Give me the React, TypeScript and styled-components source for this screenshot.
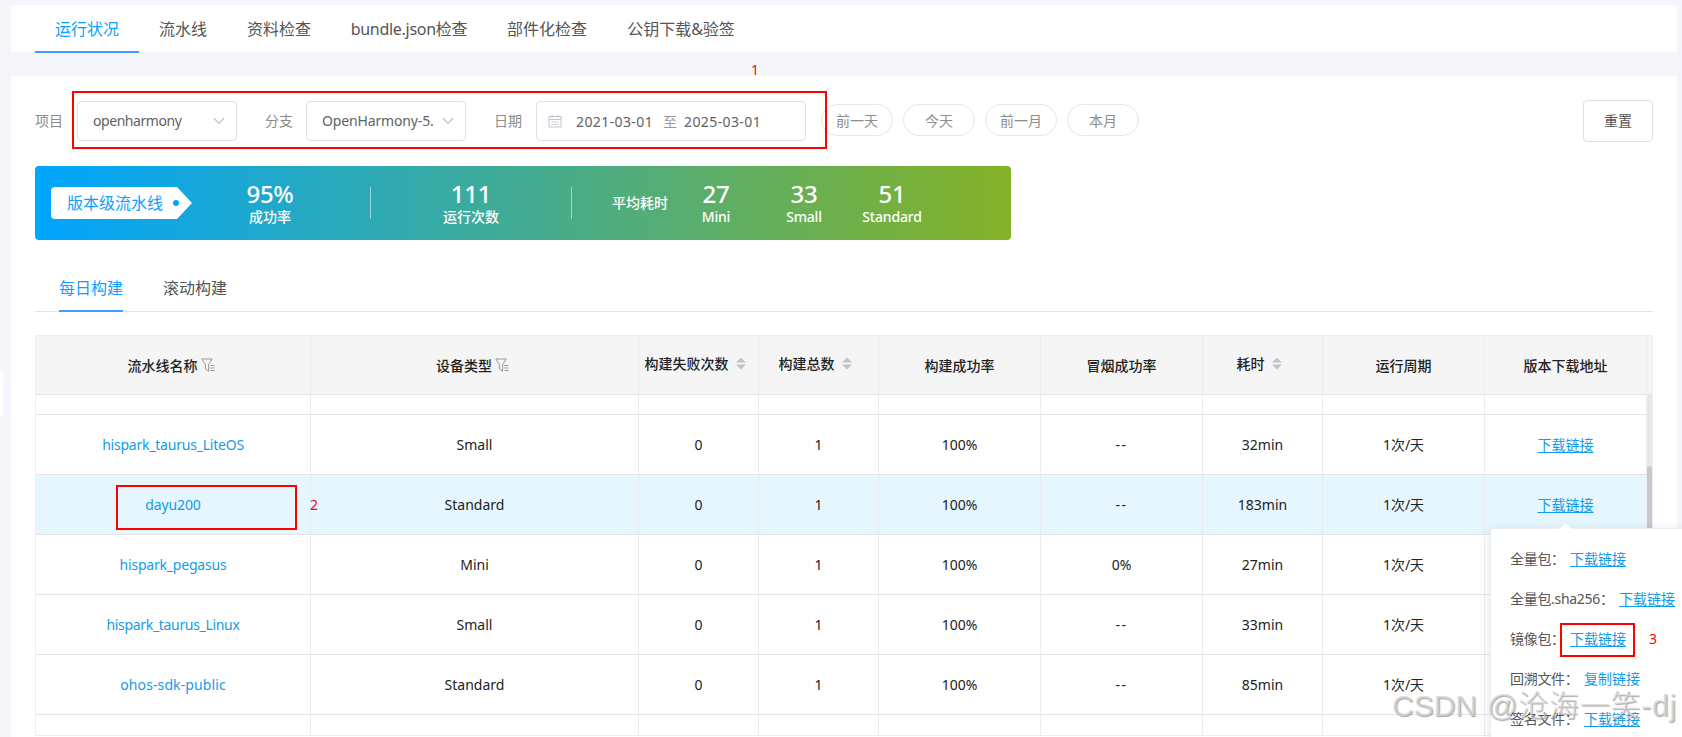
import React from 'react';
import styled, { createGlobalStyle, css } from 'styled-components';

const Global = createGlobalStyle`
  *, *::before, *::after { box-sizing: border-box; }
  html, body { margin: 0; padding: 0; }
  body {
    width: 1682px;
    height: 737px;
    overflow: hidden;
    background: #f4f6fb;
    font-family: "Noto Sans", "Noto Sans CJK SC", sans-serif;
    font-size: 14px;
    color: #222;
  }
`;

const Page = styled.div`
  position: relative;
  height: 737px;
  padding: 5px 5px 0 11px;
  overflow: hidden;
`;

const NavBar = styled.nav`
  display: flex;
  height: 47px;
  padding-left: 24px;
  background: #fff;
`;

const NavTab = styled.div<{ $w: number; $active?: boolean; $ls?: number }>`
  display: flex;
  align-items: center;
  justify-content: center;
  width: ${p => p.$w}px;
  height: 48px;
  padding-bottom: 1px;
  font-size: 16px;
  white-space: nowrap;
  letter-spacing: ${p => p.$ls ?? 0}px;
  color: ${p => (p.$active ? '#0d9fff' : '#555')};
  border-bottom: 2px solid ${p => (p.$active ? '#409eff' : 'transparent')};
`;

const Panel = styled.main`
  margin-top: 24px;
  height: 661px;
  padding: 24px 24px 0;
  background: #fff;
`;

const Filters = styled.div`
  display: flex;
  align-items: center;
  height: 42px;
`;

const Label = styled.span<{ $w: number }>`
  flex: none;
  width: ${p => p.$w}px;
  padding-bottom: 2px;
  color: #8c8c8c;
`;

const Field = styled.div<{ $w: number; $gap: number }>`
  flex: none;
  display: flex;
  align-items: center;
  width: ${p => p.$w}px;
  height: 40px;
  margin-right: ${p => p.$gap}px;
  border: 1px solid #dcdfe6;
  border-radius: 4px;
  color: #606266;
`;

const SelectText = styled.span<{ $ls: number }>`
  flex: 1;
  padding: 0 0 1px 15px;
  letter-spacing: ${p => p.$ls}px;
  white-space: nowrap;
`;

const Chevron = styled.svg`
  flex: none;
  width: 12px;
  height: 8px;
  margin-right: 11px;
`;

const Calendar = styled.svg`
  flex: none;
  width: 14px;
  height: 14px;
  margin-left: 11px;
`;

const DateText = styled.span`
  width: 78px;
  margin-left: 14px;
  padding-top: 1px;
  letter-spacing: 0.4px;
  white-space: nowrap;
`;

const DateSep = styled.span`
  width: 14px;
  margin: 0 -7px 0 9px;
  padding-bottom: 1px;
  color: #999;
`;

const Pill = styled.div`
  flex: none;
  display: flex;
  align-items: center;
  justify-content: center;
  width: 72px;
  height: 32px;
  margin: -2px 10px 0 0;
  padding-bottom: 1px;
  border: 1px solid #e6e6e6;
  border-radius: 16px;
  color: #8c8c8c;
`;

const Reset = styled.button`
  width: 70px;
  height: 42px;
  margin-left: auto;
  padding-bottom: 3px;
  border: 1px solid #dcdfe6;
  border-radius: 4px;
  background: #fff;
  font: inherit;
  color: #555;
`;

const Banner = styled.section`
  display: flex;
  align-items: center;
  width: 976px;
  height: 74px;
  margin-top: 24px;
  padding-left: 16px;
  border-radius: 4px;
  background: linear-gradient(90deg, #00a5ff, #85b226);
  color: #fff;
  font-weight: 500;
`;

const Tag = styled.div`
  display: flex;
  align-items: center;
  width: 141px;
  height: 32px;
  padding: 0 0 2px 16px;
  border-radius: 4px 0 0 4px;
  background: #fff;
  clip-path: polygon(0 0, 126px 0, 100% 50%, 126px 100%, 0 100%);
  font-size: 16px;
  font-weight: 400;
  color: #0d9fff;
`;

const Dot = styled.i`
  width: 6px;
  height: 6px;
  margin: 2px 0 0 10px;
  border-radius: 50%;
  background: #0d9fff;
`;

const Stat = styled.div<{ $w: number; $ls?: number }>`
  display: flex;
  flex-direction: column;
  align-items: center;
  width: ${p => p.$w}px;
  padding-top: 1px;
  line-height: 20px;
  letter-spacing: ${p => p.$ls ?? 0}px;
`;

const StatValue = styled.div`
  height: 26px;
  font-size: 24px;
  line-height: 26px;
  letter-spacing: -0.3px;
`;

const Rule = styled.div`
  width: 1px;
  height: 32px;
  background: rgba(255, 255, 255, 0.5);
`;

const AvgLabel = styled.div`
  width: 56px;
  margin-left: 40px;
  padding-bottom: 2px;
  white-space: nowrap;
`;

const SubTabs = styled.div`
  display: flex;
  gap: 40px;
  height: 72px;
  padding-left: 24px;
  border-bottom: 1px solid #e4e4e8;
`;

const SubTab = styled.div<{ $active?: boolean }>`
  height: 72px;
  padding-top: 36px;
  font-size: 16px;
  line-height: 24px;
  color: ${p => (p.$active ? '#0d9fff' : '#555')};
  border-bottom: 2px solid ${p => (p.$active ? '#409eff' : 'transparent')};
`;

const Table = styled.div`
  display: flex;
  flex-direction: column;
  height: 401px;
  margin-top: 23px;
  border: 1px solid #ebeef5;
  overflow: hidden;
`;

const columns = '275px 328px 120px 120px 162px 162px 120px 162px 162px';

const grid = css`
  display: grid;
  grid-template-columns: ${columns};
`;

const Head = styled.div`
  ${grid}
  flex: none;
  height: 59px;
  background: #f5f5f5;
  border-bottom: 1px solid #e4e4e8;
  font-weight: 500;
`;

const Body = styled.div`
  display: flex;
  min-height: 0;
  flex: 1;
`;

const Rows = styled.div`
  flex: none;
  width: 1611px;
`;

const Row = styled.div<{ $h?: number; $hover?: boolean }>`
  ${grid}
  height: ${p => p.$h ?? 60}px;
  background: ${p => (p.$hover ? '#e5f6fe' : '#fff')};
  border-bottom: 1px solid #e4e4e8;
`;

const Cell = styled.div<{ $lift?: number; $shift?: number; $ls?: number }>`
  display: flex;
  align-items: center;
  justify-content: center;
  padding-bottom: ${p => p.$lift ?? 0}px;
  padding-right: ${p => p.$shift ?? 0}px;
  border-right: 1px solid #ebebf3;
  letter-spacing: ${p => p.$ls ?? 0}px;
  white-space: nowrap;
`;

const Link = styled.a<{ $plain?: boolean }>`
  color: #129be8;
  text-decoration: ${p => (p.$plain ? 'none' : 'underline')};
  text-underline-offset: 2px;
`;

const Scroll = styled.div`
  width: 5px;
  border-radius: 3px 3px 0 0;
  background: #e6e8e9;
`;

const Thumb = styled.div`
  height: 200px;
  margin-top: 71px;
  border-radius: 3px;
  background: #c8c9cc;
`;

const FilterSvg = styled.svg`
  width: 14px;
  height: 14px;
  margin-left: 3px;
`;

const SortSvg = styled.svg`
  width: 10px;
  height: 13px;
  margin-left: 7px;
`;

const Popover = styled.aside`
  position: absolute;
  left: 1490px;
  top: 528px;
  width: 220px;
  height: 230px;
  padding: 9px 0 0 19px;
  border: 1px solid #ebeef5;
  border-radius: 4px;
  background: #fff;
  box-shadow: 0 2px 12px rgba(0, 0, 0, 0.1);
  color: #555;

  &::before {
    content: '';
    position: absolute;
    left: 68px;
    top: -6px;
    border: 6px solid transparent;
    border-top: 0;
    border-bottom-color: #fff;
  }
`;

const PopRow = styled.div`
  display: flex;
  align-items: center;
  height: 40px;
  padding-bottom: 1px;
  white-space: nowrap;
`;

const PopLabel = styled.span<{ $w: number }>`
  width: ${p => p.$w}px;
  letter-spacing: -0.3px;
`;

const Handle = styled.div`
  position: absolute;
  left: 0;
  top: 369px;
  width: 3px;
  height: 48px;
  border-radius: 0 4px 4px 0;
  background: #fff;
`;

const Mark = styled.div<{ $x: number; $y: number; $w: number; $h: number }>`
  position: absolute;
  left: ${p => p.$x}px;
  top: ${p => p.$y}px;
  width: ${p => p.$w}px;
  height: ${p => p.$h}px;
  border: 2px solid #f00;
`;

const MarkNo = styled.div<{ $x: number; $y: number }>`
  position: absolute;
  left: ${p => p.$x}px;
  top: ${p => p.$y}px;
  line-height: 20px;
  color: #f00;
`;

const Watermark = styled.div`
  position: absolute;
  left: 1392px;
  top: 686px;
  display: flex;
  gap: 10px;
  font-family: "Liberation Sans", "Noto Sans CJK SC", sans-serif;
  font-size: 30px;
  font-weight: 300;
  line-height: 40px;
  white-space: nowrap;
  color: rgba(215, 215, 215, 0.75);
  text-shadow: 1px 1px 1px rgba(110, 110, 110, 0.6);
`;

const Author = styled.span`
  letter-spacing: 0.75px;
`;

const Down = () => (
  <Chevron viewBox="0 0 12 8" fill="none" stroke="#c0c4cc" strokeWidth="1.2">
    <path d="M.8 1l5.200 5.500L11.200 1" />
  </Chevron>
);

const FilterIcon = () => (
  <FilterSvg viewBox="0 0 14 14" fill="none" stroke="#999">
    <path d="M.8 1h10.400L7.600 6.500v6.800L4.400 11V6.500z" />
    <path d="M9.500 7.500h4M9.500 10h4M9.500 12.500h4" />
  </FilterSvg>
);

const SortIcon = () => (
  <SortSvg viewBox="0 0 10 13" fill="#c0c4cc">
    <path d="M0 5.500L5 .5l5 5zM0 7.500h10l-5 5z" />
  </SortSvg>
);

const heads: { text: string; filter?: boolean; sort?: boolean }[] = [
  { text: '流水线名称', filter: true },
  { text: '设备类型', filter: true },
  { text: '构建失败次数', sort: true },
  { text: '构建总数', sort: true },
  { text: '构建成功率' },
  { text: '冒烟成功率' },
  { text: '耗时', sort: true },
  { text: '运行周期' },
  { text: '版本下载地址' },
];

const rows = [
  { name: 'hispark_taurus_LiteOS', ls: -0.22, kind: 'Small', smoke: '--', time: '32min' },
  { name: 'dayu200', ls: -0.1, kind: 'Standard', smoke: '--', time: '183min', hover: true },
  { name: 'hispark_pegasus', ls: -0.2, kind: 'Mini', smoke: '0%', time: '27min' },
  { name: 'hispark_taurus_Linux', ls: -0.32, kind: 'Small', smoke: '--', time: '33min' },
  { name: 'ohos-sdk-public', ls: 0.1, kind: 'Standard', smoke: '--', time: '85min' },
];

const downloads = [
  { label: '全量包：', w: 60, link: '下载链接' },
  { label: '全量包.sha256：', w: 109, link: '下载链接' },
  { label: '镜像包：', w: 60, link: '下载链接' },
  { label: '回溯文件：', w: 74, link: '复制链接', plain: true },
  { label: '签名文件：', w: 74, link: '下载链接' },
];

export default function App() {
  return (
    <>
      <Global />
      <Page>
        <NavBar>
          <NavTab $w={104} $active>运行状况</NavTab>
          <NavTab $w={88}>流水线</NavTab>
          <NavTab $w={104}>资料检查</NavTab>
          <NavTab $w={156} $ls={-0.28}>bundle.json检查</NavTab>
          <NavTab $w={120}>部件化检查</NavTab>
          <NavTab $w={148}>公钥下载&amp;验签</NavTab>
        </NavBar>
        <Panel>
          <Filters>
            <Label $w={42}>项目</Label>
            <Field $w={160} $gap={28}>
              <SelectText $ls={-0.45}>openharmony</SelectText>
              <Down />
            </Field>
            <Label $w={41}>分支</Label>
            <Field $w={160} $gap={28}>
              <SelectText $ls={-0.15}>OpenHarmony-5.</SelectText>
              <Down />
            </Field>
            <Label $w={42}>日期</Label>
            <Field $w={270} $gap={15}>
              <Calendar viewBox="0 0 14 14" fill="none" stroke="#c0c4cc">
                <path d="M1 2.500h12v10.500H1zM1 5.500h12M4 .5v3M10 .5v3" />
                <path d="M3.500 8h7M3.500 10.500h7" strokeDasharray="2 .6" />
              </Calendar>
              <DateText>2021-03-01</DateText>
              <DateSep>至</DateSep>
              <DateText>2025-03-01</DateText>
            </Field>
            <Pill>前一天</Pill>
            <Pill>今天</Pill>
            <Pill>前一月</Pill>
            <Pill>本月</Pill>
            <Reset>重置</Reset>
          </Filters>
          <Banner>
            <Tag>版本级流水线<Dot /></Tag>
            <Stat $w={156}><StatValue>95%</StatValue>成功率</Stat>
            <Stat $w={22} />
            <Rule />
            <Stat $w={200}><StatValue>111</StatValue>运行次数</Stat>
            <Rule />
            <AvgLabel>平均耗时</AvgLabel>
            <Stat $w={96} $ls={-0.2}><StatValue>27</StatValue>Mini</Stat>
            <Stat $w={80} $ls={-0.2}><StatValue>33</StatValue>Small</Stat>
            <Stat $w={96} $ls={-0.2}><StatValue>51</StatValue>Standard</Stat>
          </Banner>
          <SubTabs>
            <SubTab $active>每日构建</SubTab>
            <SubTab>滚动构建</SubTab>
          </SubTabs>
          <Table>
            <Head>
              {heads.map(h => (
                <Cell key={h.text} $lift={h.sort ? 4 : 0} $shift={h.sort ? 7 : h.filter ? 4 : 0}>
                  {h.text}
                  {h.filter && <FilterIcon />}
                  {h.sort && <SortIcon />}
                </Cell>
              ))}
            </Head>
            <Body>
              <Rows>
                <Row $h={20}>{heads.map(h => <Cell key={h.text} />)}</Row>
                {rows.map(r => (
                  <Row key={r.name} $hover={r.hover}>
                    <Cell $ls={r.ls}><Link $plain>{r.name}</Link></Cell>
                    <Cell>{r.kind}</Cell>
                    <Cell>0</Cell>
                    <Cell>1</Cell>
                    <Cell>100%</Cell>
                    <Cell $ls={r.smoke === '--' ? 1.5 : 0}>{r.smoke}</Cell>
                    <Cell>{r.time}</Cell>
                    <Cell $lift={2}>1次/天</Cell>
                    <Cell $lift={2}><Link>下载链接</Link></Cell>
                  </Row>
                ))}
                <Row>{heads.map(h => <Cell key={h.text} />)}</Row>
              </Rows>
              <Scroll><Thumb /></Scroll>
            </Body>
          </Table>
        </Panel>
        <Handle />
        <Popover>
          {downloads.map(d => (
            <PopRow key={d.label}>
              <PopLabel $w={d.w}>{d.label}</PopLabel>
              <Link $plain={d.plain}>{d.link}</Link>
            </PopRow>
          ))}
        </Popover>
        <Mark $x={72} $y={91} $w={755} $h={58} />
        <Mark $x={116} $y={485} $w={181} $h={45} />
        <Mark $x={1560} $y={623} $w={75} $h={34} />
        <MarkNo $x={751} $y={60}>1</MarkNo>
        <MarkNo $x={310} $y={495}>2</MarkNo>
        <MarkNo $x={1649} $y={629}>3</MarkNo>
        <Watermark><span>CSDN</span><Author>@沧海一笑-dj</Author></Watermark>
      </Page>
    </>
  );
}
